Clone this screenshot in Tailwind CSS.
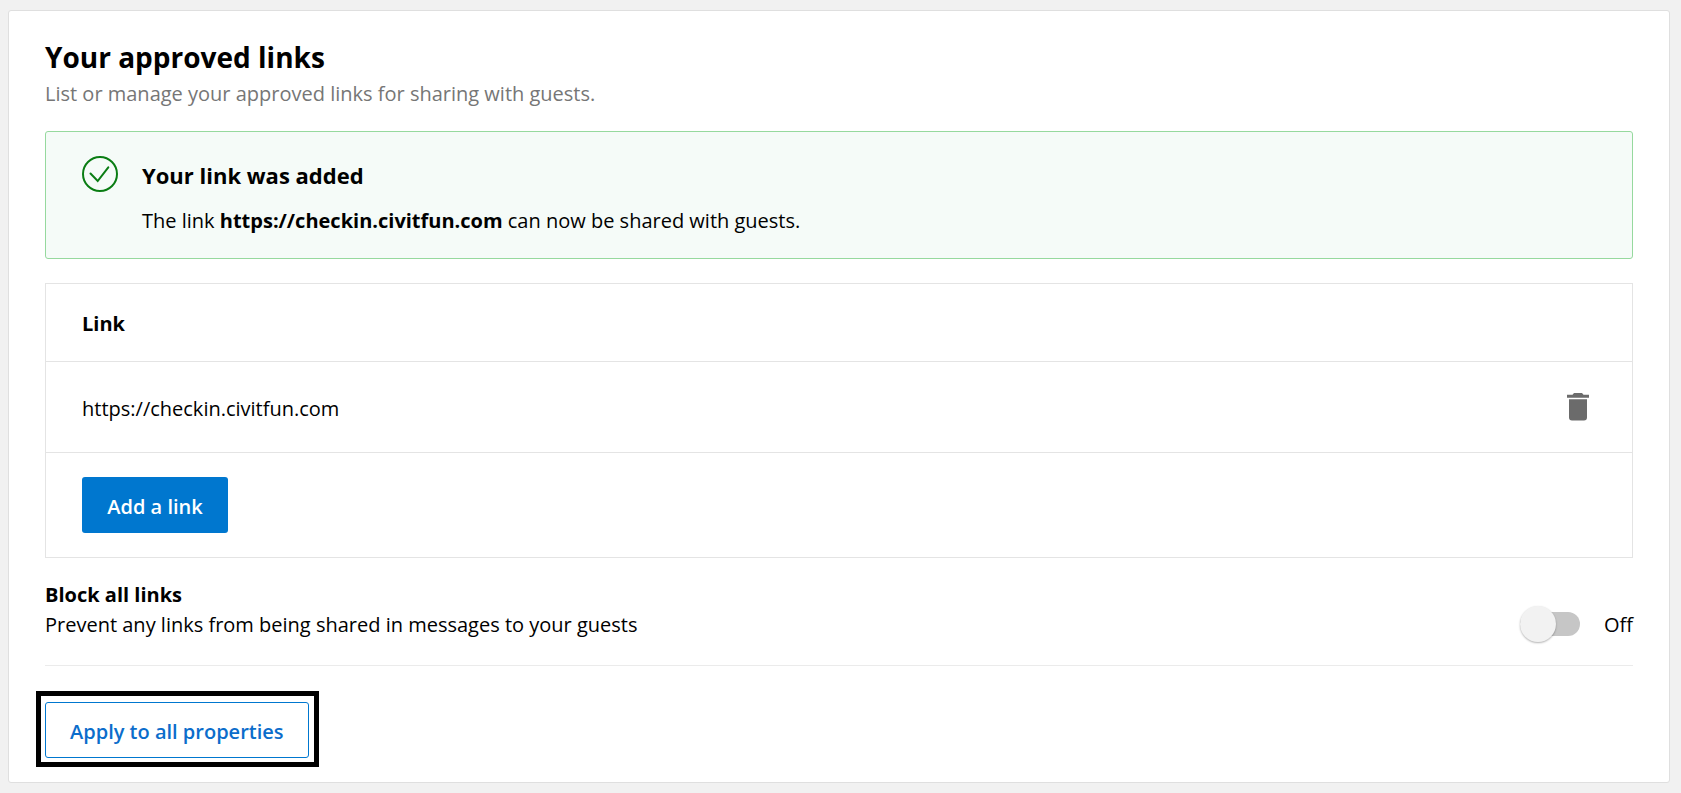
<!DOCTYPE html>
<html lang="en">
<head>
<meta charset="utf-8">
<meta name="viewport" content="width=device-width, initial-scale=1">
<title>Your approved links</title>
<script src="https://cdn.jsdelivr.net/npm/@tailwindcss/browser@4"></script>
</head>
<body class="min-h-screen bg-[#f1f1f1] pt-[10px] pr-[11px] pb-[9px] pl-2 font-['Open_Sans','Noto_Sans',sans-serif] text-[20px] leading-[30px] text-black">
<main class="rounded-[3px] border border-[#dfdfdf] bg-white px-9 pt-7 pb-[15px]">
  <header>
    <h1 class="text-[28px] leading-[36px] font-bold">Your approved links</h1>
    <p class="mt-1 text-[#767676]">List or manage your approved links for sharing with guests.</p>
  </header>

  <section role="status" class="mt-[22px] flex gap-6 rounded-[3px] border border-[#96d99e] bg-[#f5fbf8] px-9 pt-6 pb-[22px]">
    <svg class="size-9 shrink-0" viewBox="0 0 36 36" fill="none" stroke="#0a7d14" stroke-width="2" aria-hidden="true">
      <circle cx="18" cy="18" r="17"/>
      <path d="M8.500 17.500 15.700 25 26.300 11.300" stroke-linecap="round"/>
    </svg>
    <div>
      <h2 class="pt-1 text-[22px] leading-[30px] font-bold">Your link was added</h2>
      <p class="mt-4">The link <strong class="font-bold">https://checkin.civitfun.com</strong> can now be shared with guests.</p>
    </div>
  </section>

  <table class="mt-6 w-full border border-[#e4e4e4]">
    <thead>
      <tr class="h-[78px] border-b border-[#e4e4e4]"><th scope="col" colspan="2" class="pt-[2px] pl-9 text-left font-bold">Link</th></tr>
    </thead>
    <tbody>
      <tr class="h-[91px] border-b border-[#e4e4e4]">
        <td class="pt-1 pl-9">https://checkin.civitfun.com</td>
        <td class="pr-9">
          <button type="button" aria-label="Delete link" class="ml-auto flex size-9 items-center justify-center">
            <svg class="h-7 w-[22px]" viewBox="0 0 22 28" fill="#6b6b6b" aria-hidden="true">
              <path d="M0 1.800h5.500L7 0h8L16.500 1.800H22v3H0zM2 6.200h18V24.500a3 3 0 0 1-3 3H5a3 3 0 0 1-3-3z"/>
            </svg>
          </button>
        </td>
      </tr>
      <tr class="h-[105px]">
        <td colspan="2" class="pl-9">
          <button type="button" class="block h-14 min-w-[146px] rounded-[3px] bg-[#0077cf] px-[23px] pt-1 font-semibold text-white">Add a link</button>
        </td>
      </tr>
    </tbody>
  </table>

  <section class="mt-[22px] flex items-end justify-between border-b border-[#ebebeb] pb-[22px]">
    <div class="pb-[3px]">
      <h2 id="block-title" class="font-bold">Block all links</h2>
      <p id="block-note">Prevent any links from being shared in messages to your guests</p>
    </div>
    <label class="flex items-center gap-6 leading-[36px]">
      <input type="checkbox" role="switch" aria-labelledby="block-title" aria-describedby="block-note" class="relative h-6 w-[60px] appearance-none rounded-full bg-[#c6c6c6] before:absolute before:-top-[6px] before:left-0 before:size-9 before:rounded-full before:bg-[#f2f2f2] before:shadow-[0_1px_2px_rgba(0,0,0,0.3)] before:content-['']">
      <span class="pt-[2px]">Off</span>
    </label>
  </section>

  <div class="mt-[25px] -ml-[9px] w-fit border-5 border-black pt-[6px] pr-[5px] pb-1 pl-1">
    <button type="button" class="block h-14 rounded-[3px] border border-[#0077cf] px-6 pt-1 font-semibold text-[#0b6dcb]">Apply to all properties</button>
  </div>
</main>
</body>
</html>
